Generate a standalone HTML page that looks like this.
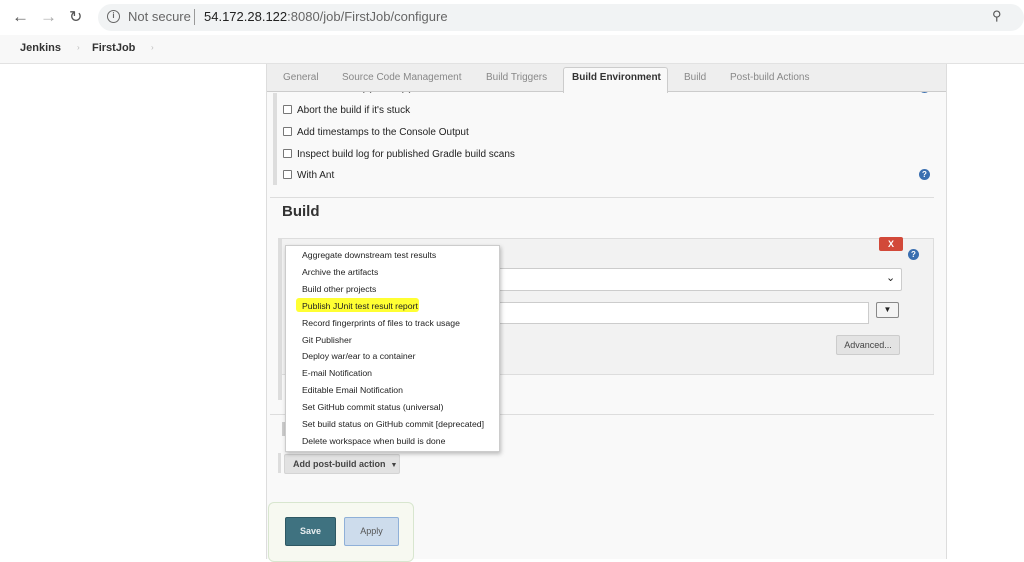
<!DOCTYPE html>
<html><head><style>
*{margin:0;padding:0;box-sizing:border-box}
body{width:1024px;height:559px;overflow:hidden;background:#fff;font-family:"Liberation Sans",Arial,sans-serif;position:relative;color:#333}
.a{position:absolute}
.cb{position:absolute;width:9px;height:9px;border:1px solid #777;background:#fff;border-radius:1px}
.t{position:absolute;font-size:10px;color:#222}
.mi{position:absolute;left:302px;font-size:8.7px;color:#222}
.q{position:absolute;width:11px;height:11px;border-radius:50%;background:#3a6fb0;color:#fff;font-size:8px;font-weight:bold;text-align:center;line-height:11px}
</style></head><body>
<div class="a" style="left:0;top:0;width:1024px;height:35px;background:#fff"></div>
<div class="a" style="left:12px;top:7px;font-size:17px;color:#555">&#8592;</div>
<div class="a" style="left:40px;top:7px;font-size:17px;color:#aaa">&#8594;</div>
<div class="a" style="left:69px;top:7px;font-size:16px;color:#555">&#8635;</div>
<div class="a" style="left:98px;top:4px;width:926px;height:27px;background:#f1f3f4;border-radius:14px"></div>
<div class="a" style="left:107px;top:10px;width:13px;height:13px;border:1.5px solid #666;border-radius:50%;font-size:8px;text-align:center;line-height:10px;color:#666;font-weight:bold">i</div>
<div class="a" style="left:128px;top:9px;font-size:13px;color:#666">Not secure</div>
<div class="a" style="left:194px;top:9px;width:1px;height:16px;background:#999"></div>
<div class="a" style="left:204px;top:9px;font-size:13px;color:#222">54.172.28.122<span style="color:#666">:8080/job/FirstJob/configure</span></div>
<div class="a" style="left:992px;top:8px;font-size:13px;color:#555">&#9906;</div>
<div class="a" style="left:0;top:35px;width:1024px;height:29px;background:#f8f8f8;border-bottom:1px solid #e2e2e2"></div>
<div class="a" style="left:20px;top:42px;font-size:11px;font-weight:bold;color:#333">Jenkins</div>
<div class="a" style="left:77px;top:43px;font-size:8px;color:#bbb">&#8250;</div>
<div class="a" style="left:92px;top:42px;font-size:11px;font-weight:bold;color:#333">FirstJob</div>
<div class="a" style="left:151px;top:43px;font-size:8px;color:#bbb">&#8250;</div>
<div class="a" style="left:266px;top:64px;width:681px;height:495px;background:#f9f9f9;border-left:1px solid #ddd;border-right:1px solid #ddd"></div>
<div class="a" style="left:283px;top:83px;font-size:10px;color:#444;height:10px;overflow:hidden;width:200px"><div style="margin-top:0">☐ Use secret text(s) or file(s)</div></div>
<div class="q" style="left:919px;top:84px;height:9px"></div>
<div class="a" style="left:267px;top:64px;width:679px;height:28px;background:#eee;border-bottom:1px solid #ccc"></div>
<div class="a" style="left:283px;top:72px;font-size:10px;color:#888">General</div>
<div class="a" style="left:342px;top:72px;font-size:10px;color:#888">Source Code Management</div>
<div class="a" style="left:486px;top:72px;font-size:10px;color:#888">Build Triggers</div>
<div class="a" style="left:563px;top:67px;width:105px;height:26px;background:#f9f9f9;border:1px solid #ccc;border-bottom:none;border-radius:3px 3px 0 0"></div>
<div class="a" style="left:572px;top:72px;font-size:10px;font-weight:bold;color:#333">Build Environment</div>
<div class="a" style="left:684px;top:72px;font-size:10px;color:#888">Build</div>
<div class="a" style="left:730px;top:72px;font-size:10px;color:#888">Post-build Actions</div>
<div class="a" style="left:273px;top:93px;width:4px;height:92px;background:#ddd"></div>
<div class="cb" style="left:283px;top:105px"></div><div class="t" style="left:297px;top:105px">Abort the build if it's stuck</div>
<div class="cb" style="left:283px;top:127px"></div><div class="t" style="left:297px;top:127px">Add timestamps to the Console Output</div>
<div class="cb" style="left:283px;top:149px"></div><div class="t" style="left:297px;top:149px">Inspect build log for published Gradle build scans</div>
<div class="cb" style="left:283px;top:170px"></div><div class="t" style="left:297px;top:170px">With Ant</div>
<div class="q" style="left:919px;top:169px">?</div>
<div class="a" style="left:270px;top:197px;width:664px;height:1px;background:#ddd"></div>
<div class="a" style="left:282px;top:203px;font-size:15px;font-weight:bold;color:#333">Build</div>
<div class="a" style="left:278px;top:238px;width:656px;height:137px;background:#f2f2f2;border:1px solid #ddd"></div>
<div class="a" style="left:278px;top:238px;width:4px;height:162px;background:#ddd"></div>
<div class="a" style="left:879px;top:237px;width:24px;height:14px;background:#d24939;border-radius:2px;color:#fff;font-size:9px;font-weight:bold;text-align:center;line-height:14px">X</div>
<div class="q" style="left:908px;top:249px">?</div>
<div class="a" style="left:440px;top:268px;width:462px;height:23px;background:#fff;border:1px solid #ccc;border-radius:2px"></div>
<div class="a" style="left:886px;top:271px;font-size:11px;color:#222">&#8964;</div>
<div class="a" style="left:440px;top:302px;width:429px;height:22px;background:#fff;border:1px solid #ccc"></div>
<div class="a" style="left:876px;top:302px;width:23px;height:16px;background:#f4f4f4;border:1px solid #888;border-radius:2px;font-size:8px;text-align:center;line-height:14px;color:#222">&#9660;</div>
<div class="a" style="left:836px;top:335px;width:64px;height:20px;background:#e3e3e3;border:1px solid #ccc;border-radius:2px;font-size:9px;text-align:center;line-height:18px;color:#444">Advanced...</div>
<div class="a" style="left:270px;top:414px;width:664px;height:1px;background:#ddd"></div>
<div class="a" style="left:282px;top:422px;width:4px;height:14px;background:#ccc"></div>
<div class="a" style="left:278px;top:453px;width:3px;height:20px;background:#ddd"></div>
<div class="a" style="left:284px;top:454px;width:116px;height:20px;background:#e2e2e2;border:1px solid #d4d4d4;border-radius:2px;font-size:9px;font-weight:bold;color:#444;line-height:18px;padding-left:8px">Add post-build action &nbsp;<span style="font-size:7px">&#9660;</span></div>
<div class="a" style="left:285px;top:245px;width:215px;height:207px;background:#fff;border:1px solid #ccc;box-shadow:1px 2px 4px rgba(0,0,0,.25)"></div>
<div class="a" style="left:296px;top:298px;width:123px;height:14px;background:#ffff33;border-radius:3px"></div>
<div class="mi" style="top:250px">Aggregate downstream test results</div>
<div class="mi" style="top:267px">Archive the artifacts</div>
<div class="mi" style="top:284px">Build other projects</div>
<div class="mi" style="top:301px">Publish JUnit test result report</div>
<div class="mi" style="top:318px">Record fingerprints of files to track usage</div>
<div class="mi" style="top:335px">Git Publisher</div>
<div class="mi" style="top:351px">Deploy war/ear to a container</div>
<div class="mi" style="top:368px">E-mail Notification</div>
<div class="mi" style="top:385px">Editable Email Notification</div>
<div class="mi" style="top:402px">Set GitHub commit status (universal)</div>
<div class="mi" style="top:419px">Set build status on GitHub commit [deprecated]</div>
<div class="mi" style="top:436px">Delete workspace when build is done</div>
<div class="a" style="left:268px;top:502px;width:146px;height:60px;background:#f7f9f1;border:1px solid #d8e6cf;border-radius:6px"></div>
<div class="a" style="left:285px;top:517px;width:51px;height:29px;background:#3f7280;border:1px solid #2e5863;border-radius:2px;color:#e8eef0;font-size:9px;font-weight:bold;text-align:center;line-height:27px">Save</div>
<div class="a" style="left:344px;top:517px;width:55px;height:29px;background:#cddcec;border:1px solid #8fb0d8;border-radius:2px;color:#555;font-size:9px;text-align:center;line-height:27px">Apply</div>
</body></html>
